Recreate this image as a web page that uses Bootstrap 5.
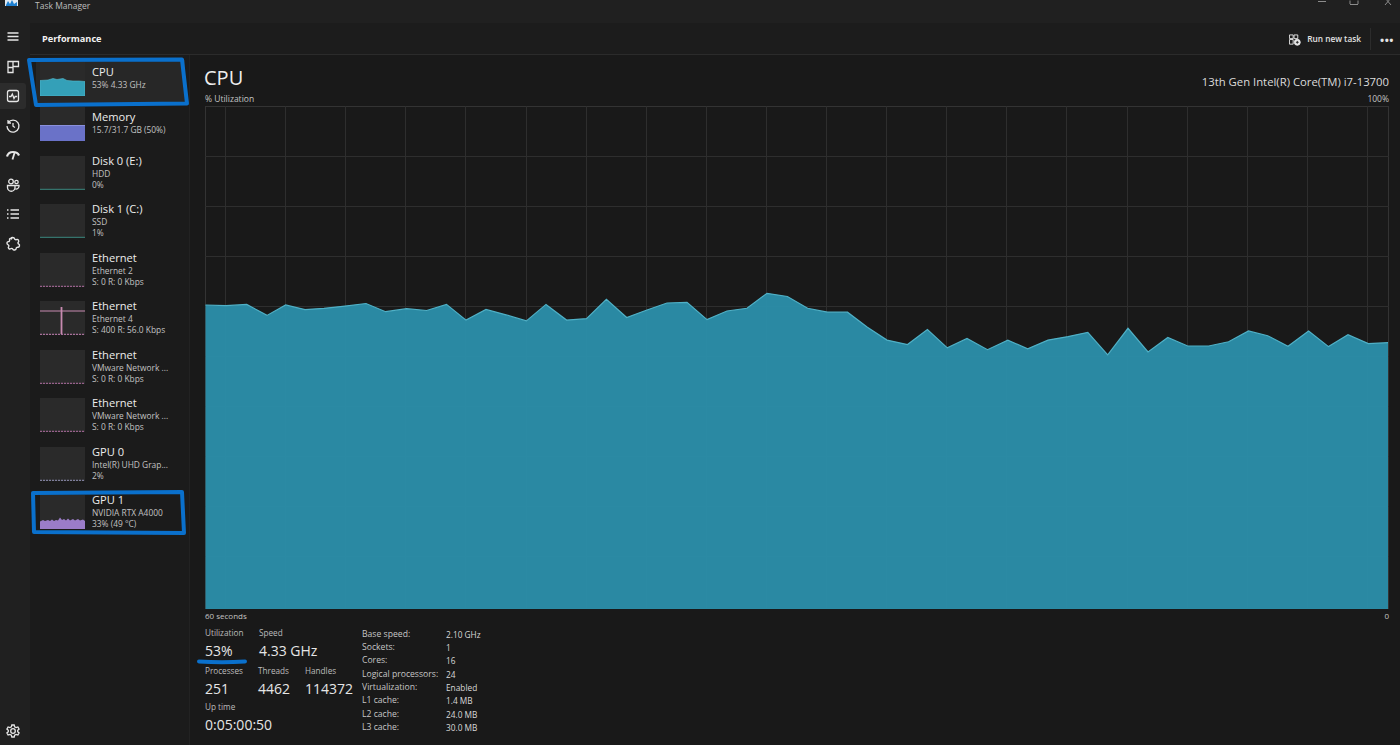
<!DOCTYPE html>
<html lang="en"><head><meta charset="utf-8"><title>Task Manager</title>
<link href="https://cdn.jsdelivr.net/npm/bootstrap@5.3.0/dist/css/bootstrap.min.css" rel="stylesheet">
<style>
html,body{height:100%;margin:0;background:#1c1c1c;color:#e4e4e4;font-family:"Open Sans","Noto Sans",sans-serif;overflow:hidden}
.tm-shell{width:1400px;height:745px;position:relative;background:#202020}
.tm-title{height:23px;font-size:8.5px;line-height:12px;color:#bdbdbd}
.tm-logo{width:35px;flex:none;padding-left:5px}
.tm-winctl{width:94px;height:6px;overflow:hidden;flex:none;color:#8c8c8c}
.tm-rail{width:30px;flex:none;margin-top:-.5px}
.tm-railbtn{height:29.5px;width:25px;color:#e6e6e6}
.tm-onbox{background:#2c2c2c;border-radius:0 3px 3px 0;height:26px;width:26px;margin:1.750px 0;padding-right:1px}
.tm-gear{margin-top:auto;margin-bottom:-1px}
.tm-main{background:#191919;border-top-left-radius:6px;min-width:0}
.tm-head{height:32px;border-bottom:1px solid #2b2b2b;padding-left:12px;background:#1c1c1c}
.tm-headtitle{font-size:9.200px;font-weight:700;color:#f2f2f2;padding-top:1px}
.tm-run{font-size:8.300px;font-weight:600;color:#e2e2e2;gap:6px;padding-top:2px}
.tm-sep{width:1px;height:22px;background:#2c2c2c;margin:0 9px 0 9px}
.tm-dots{font-size:11px;font-weight:700;letter-spacing:.5px;width:14px;margin-right:6px;line-height:1;padding-top:2px}
.tm-list{width:160px;flex:none;padding-top:1.500px;border-right:1px solid #222;background:#1b1b1b}
.tm-item{height:48.450px;padding:2.500px 0 0 10px;gap:7px}
.tm-sel{margin:3px 4px 0 6px;height:45.450px;padding-left:4px;background:#272727}
.tm-thumb{width:45px;height:34px;background:#2a2a2a;flex:none;display:block}
.tm-txt{margin-top:-2px}
.tm-txt-cpu{margin-top:3px}
.tm-txt-mem{margin-top:3px}
.tm-name{font-size:11.100px;line-height:14px;color:#ededed}
.tm-sub{font-size:8.400px;line-height:11px;color:#c2c2c2;white-space:nowrap}
.tm-pane{min-width:0;padding-left:15px;padding-right:11px}
.tm-toprow{padding-top:9px}
.tm-h1{font-size:20px;line-height:28px;color:#ededed;font-weight:400;margin-left:-1px}
.tm-model{font-size:11.300px;line-height:15px;color:#dcdcdc;margin-top:6px}
.tm-cap{font-size:8px;line-height:10px;color:#c4c4c4}
.tm-caplg{font-size:8.500px;margin-top:2px}
.tm-chart{display:block;width:1184px;height:503px;margin-top:2px}
.tm-foot{margin-top:2px}
.tm-lab{font-size:8.200px;line-height:11px;color:#bcbcbc}
.tm-val{font-size:14px;line-height:19px;color:#e6e6e6;margin-top:3px}
.tm-stats{width:157px;flex:none}
.tm-statwrap{margin-top:6px}
.tm-r2{margin-top:5px}
.tm-r3{margin-top:3px}
.tm-c1{width:54px}
.tm-c2{width:53px}
.tm-c3{width:47px}
.tm-tbl{font-size:8.650px;line-height:13.350px;color:#c6c6c6;margin-top:.5px}
.tm-tbl dt{font-weight:400;width:84px}
.tm-tbl dd{margin:0;color:#d8d8d8;font-size:8.300px}
.tm-note{position:absolute;left:0;top:0;pointer-events:none}
</style></head>
<body>
<div class="tm-shell d-flex flex-column">
  <div class="tm-title d-flex align-items-start">
    <div class="tm-logo"><svg width="13" height="6" viewBox="0 0 13 6" class="d-block"><rect width="13" height="6" fill="#dfe9f3"/><path d="M1 5L3 1 5 4 7 0 9 4 12 2V6H1Z" fill="#1d7fd0"/></svg></div>
    <div class="flex-grow-1">Task Manager</div>
    <div class="tm-winctl"><svg width="94" height="6" viewBox="0 0 94 6" fill="none" stroke="currentColor" class="d-block"><path d="M12 1.500h8M44 4V.5M52 4V.5M44 4.500h8M79 -2l6 7M85 -2l-6 7"/></svg></div>
  </div>
  <div class="d-flex flex-grow-1" style="min-height:0">
    <div class="tm-rail d-flex flex-column align-items-start" id="rail"></div>
    <div class="tm-main flex-grow-1 d-flex flex-column">
      <div class="tm-head d-flex align-items-center justify-content-between">
        <div class="tm-headtitle">Performance</div>
        <div class="d-flex align-items-center"><div class="tm-run d-flex align-items-center">
          <svg width="12" height="12" viewBox="0 0 13 12" fill="none" stroke="#e6e6e6"><path d="M.5.5h4v4h-4zM5.5.5h4v4h-4zM.5 5.500h4v5h-4z"/><circle cx="9" cy="8.500" r="3.200" fill="#e6e6e6"/><path d="M7.500 8.500h3M9 7v3" stroke="#222"/></svg>
          Run new task</div><div class="tm-sep"></div><div class="tm-dots">•••</div></div>
      </div>
      <div class="d-flex flex-grow-1" style="min-height:0">
        <div class="tm-list" id="list"></div>
        <div class="tm-pane flex-grow-1 d-flex flex-column">
          <div class="d-flex justify-content-between align-items-center tm-toprow">
            <div class="tm-h1">CPU</div><div class="tm-model">13th Gen Intel(R) Core(TM) i7-13700</div>
          </div>
          <div class="d-flex justify-content-between tm-cap tm-caplg"><span>% Utilization</span><span>100%</span></div>
          <svg class="tm-chart" id="chart" viewBox="0 0 1184 503"></svg>
          <div class="d-flex justify-content-between tm-cap tm-foot"><span>60 seconds</span><span>0</span></div>
          <div class="d-flex tm-statwrap">
            <div class="tm-stats">
              <div class="d-flex"><div class="tm-c1"><div class="tm-lab">Utilization</div><div class="tm-val">53%</div></div><div><div class="tm-lab">Speed</div><div class="tm-val">4.33 GHz</div></div></div>
              <div class="d-flex tm-r2"><div class="tm-c2"><div class="tm-lab">Processes</div><div class="tm-val">251</div></div><div class="tm-c3"><div class="tm-lab">Threads</div><div class="tm-val">4462</div></div><div><div class="tm-lab">Handles</div><div class="tm-val">114372</div></div></div>
              <div class="tm-r3"><div class="tm-lab">Up time</div><div class="tm-val">0:05:00:50</div></div>
            </div>
            <div class="tm-tbl" id="tbl"></div>
          </div>
        </div>
      </div>
    </div>
  </div>
  <svg class="tm-note" width="1400" height="745" viewBox="0 0 1400 745" fill="none" stroke="#0a70cc" stroke-width="4" stroke-linejoin="round">
    <path d="M29 60L182 59.500L187 103.500L36 105Z"/>
    <path d="M33 493L182 492L184 533L34 532Z"/>
    <path d="M199 661.500Q222 663 245 661.500" stroke-linecap="round"/>
  </svg>
</div>
<script>
const ic={
menu:'<path d="M3.500 5h11M3.500 8.500h11M3.500 12h11"/>',
proc:'<path d="M4 3.500h5v6H4zM9 3.500h5.500v5H9zM4 9.500h5v5H4z"/>',
perf:'<rect x="3.500" y="3.500" width="11" height="11" rx="2"/><path d="M5 9.500h2l1.300-2.500 1.700 4.500 1.200-2h2"/>',
hist:'<path d="M4.200 5.500A6 6 0 1 1 3 9M4 3v3h3M9 6v3.200l2 1.300"/>',
start:'<path d="M3 10.500C4 7 6.500 6 9 6s5 1 6 3.500" stroke-width="2.200"/><path d="M8.500 13.500L10.500 7" stroke-width="1.800"/>',
users:'<circle cx="7" cy="5.500" r="2.300"/><circle cx="12.500" cy="6" r="1.700"/><path d="M3.500 9.500h7.500v2a3.700 3.700 0 0 1-7.500 0zM11.500 9.500h3.500v1a3 3 0 0 1-3.500 2.500"/>',
det:'<path d="M6.500 5h8.500M6.500 9h8.500M6.500 13h8.500" stroke-width="1.300"/><path d="M3 5h1.500M3 9h1.500M3 13h1.500" stroke-width="1.600"/>',
svc:'<path d="M7 3.500c.3-1.300 3.200-1.300 3.500.2.200 1 1.500 1.300 2.300.8 1.200-.6 2.500 1.500 1.600 2.500-.7.700-.5 1.800.4 2.200 1.300.6.700 3.200-.9 3-.9-.1-1.800.5-1.800 1.500 0 1.300-2.600 1.900-3.200.5-.4-.9-1.600-1-2.300-.4-1.200.9-3-1-2-2.200.5-.7.200-1.800-.7-2-1.400-.5-1.200-3 .4-3 1 0 1.500-.9 1.200-1.800-.3-1.200 1.600-1.900 2.500-.8z" stroke-width="1.400"/>',
gear:'<circle cx="9" cy="9" r="2.300"/><path d="M7.800 3h2.400l.4 1.800 1.500.8 1.800-.6 1.200 2.100-1.400 1.200v1.400l1.400 1.200-1.200 2.100-1.800-.6-1.500.8-.4 1.800H7.800l-.4-1.800-1.500-.8-1.800.6-1.200-2.100 1.400-1.200V8.300L2.900 7.100 4.100 5l1.800.6 1.500-.8z"/>'};
const svg=k=>`<svg width="18" height="18" viewBox="0 0 18 18" fill="none" stroke="currentColor" stroke-width="1.300">${ic[k]}</svg>`;
let r='';['menu','proc','perf','hist','start','users','det','svc'].forEach(k=>{r+=`<div class="tm-railbtn d-flex align-items-center justify-content-center ${k=='perf'?'tm-onbox':''}">${svg(k)}</div>`});
r+=`<div class="tm-railbtn tm-gear d-flex align-items-center justify-content-center">${svg('gear')}</div>`;
document.getElementById('rail').innerHTML=r;
const items=[
['CPU','53% 4.33 GHz','','#2f9cb5'],['Memory','15.7/31.7 GB (50%)','','#6a72c8'],
['Disk 0 (E:)','HDD','0%','#35736c'],['Disk 1 (C:)','SSD','1%','#35736c'],
['Ethernet','Ethernet 2','S: 0 R: 0 Kbps','#96608a'],['Ethernet','Ethernet 4','S: 400 R: 56.0 Kbps','#a8709a'],
['Ethernet','VMware Network ...','S: 0 R: 0 Kbps','#96608a'],['Ethernet','VMware Network ...','S: 0 R: 0 Kbps','#96608a'],
['GPU 0','Intel(R) UHD Grap...','2%','#7d7d9a'],['GPU 1','NVIDIA RTX A4000','33%  (49 °C)','#9b7cc8']];
let l='';
items.forEach((it,i)=>{
 let extra='';
 if(i==0){extra=`<path d="M0 34V18.500L8 18 13 16.500 17 17.500 23 16.500 27 18.500 33 19 39 19 45 19.500V34Z" fill="#34a0b8" stroke="#55bdd0" stroke-width=".6"/>`}
 else if(i==1){extra=`<rect y="18.500" width="45" height="15.500" fill="#6a72c8"/><path d="M0 18.500H45" stroke="#8a90dc"/>`}
 else if(i==9){extra=`<path d="M0 34V26.500L3 25 5 26 8 25 10 26 12 24.500 14 26 16 25 18 25.500 20 22.500 22 25 24 24 26 25.500 28 23.500 30 25.500 33 24 35 25.500 38 24 40 25.500 43 24.500 45 26V34Z" fill="#9b7cc8"/>`}
 else{extra=`<path d="M0 33.300H45" stroke="${it[3]}" stroke-width="1.200" ${i==2||i==3?'':'stroke-dasharray="2 1"'}/>`}
 if(i==5)extra+=`<path d="M0 10H45" stroke="#c78ab0"/><path d="M21.500 6V33" stroke="#c78ab0" stroke-width="1.800"/>`;
 const tc=i==0?'tm-txt-cpu':i==1?'tm-txt-mem':'tm-txt';
 l+=`<div class="tm-item d-flex ${i==0?'tm-sel':''}"><svg class="tm-thumb" viewBox="0 0 45 34">${extra}</svg><div class="${tc}"><div class="tm-name">${it[0]}</div><div class="tm-sub">${it[1]}</div><div class="tm-sub">${it[2]}</div></div></div>`;
});
document.getElementById('list').innerHTML=l;
const P=[[205.500,308.700],[226,309.500],[246.700,308],[267,320.600],[285.700,308.700],[305,314],[324,312.500],[345,310],[366,307],[385.600,316.400],[406.600,313],[426.600,315],[446.500,308],[466,326],[486,313.700],[506,320],[526.400,327],[546,308],[566.600,326],[586.500,324.400],[606.400,302],[626.700,323],[647,314.500],[667,306.400],[687,305.600],[707,325.500],[727,315.600],[747,312.500],[767,295.300],[787.400,299],[807.600,312.500],[827.500,317],[847.500,317],[867.400,334.300],[887,349],[907.500,354],[927.400,337],[947.300,358],[967,347],[987.500,360],[1007.800,349],[1027.700,359],[1048,349],[1068,345],[1087.800,340],[1107.700,366],[1128,335.500],[1148,362.700],[1167.800,346],[1187.700,355.800],[1208.700,355.800],[1228.600,351],[1248.500,338.500],[1267.700,344],[1288,356],[1308.600,338.500],[1328.500,356.500],[1348,342.800],[1368.300,353],[1388,352]];
const ox=205,oy=106;
let s='<rect x=".5" y=".5" width="1183" height="502" fill="#191919" stroke="#333"/>';
for(let y=50.500;y<500;y+=50)s+=`<path d="M0 ${y}H1184" stroke="#2e2e2e"/>`;
for(let x=225;x<1385;x+=60.100){const vx=Math.round(x-ox)+.5;s+=`<path d="M${vx} 0V503" stroke="#2e2e2e"/>`}
const pts=P.map(p=>`${(p[0]-ox).toFixed(1)} ${(280+(p[1]-280)*.871-oy).toFixed(1)}`).join(' L');
s+=`<path d="M.5 503L${pts} L1183 503Z" fill="#2b8da8" fill-opacity=".97"/><path d="M${pts}" fill="none" stroke="#4fb0c6" stroke-width="1.200"/>`;
document.getElementById('chart').innerHTML=s;
let t='';[['Base speed:','2.10 GHz'],['Sockets:','1'],['Cores:','16'],['Logical processors:','24'],['Virtualization:','Enabled'],['L1 cache:','1.4 MB'],['L2 cache:','24.0 MB'],['L3 cache:','30.0 MB']].forEach(a=>{t+=`<div class="d-flex"><dt>${a[0]}</dt><dd>${a[1]}</dd></div>`});
document.getElementById('tbl').innerHTML=t;
</script>
</body></html>
